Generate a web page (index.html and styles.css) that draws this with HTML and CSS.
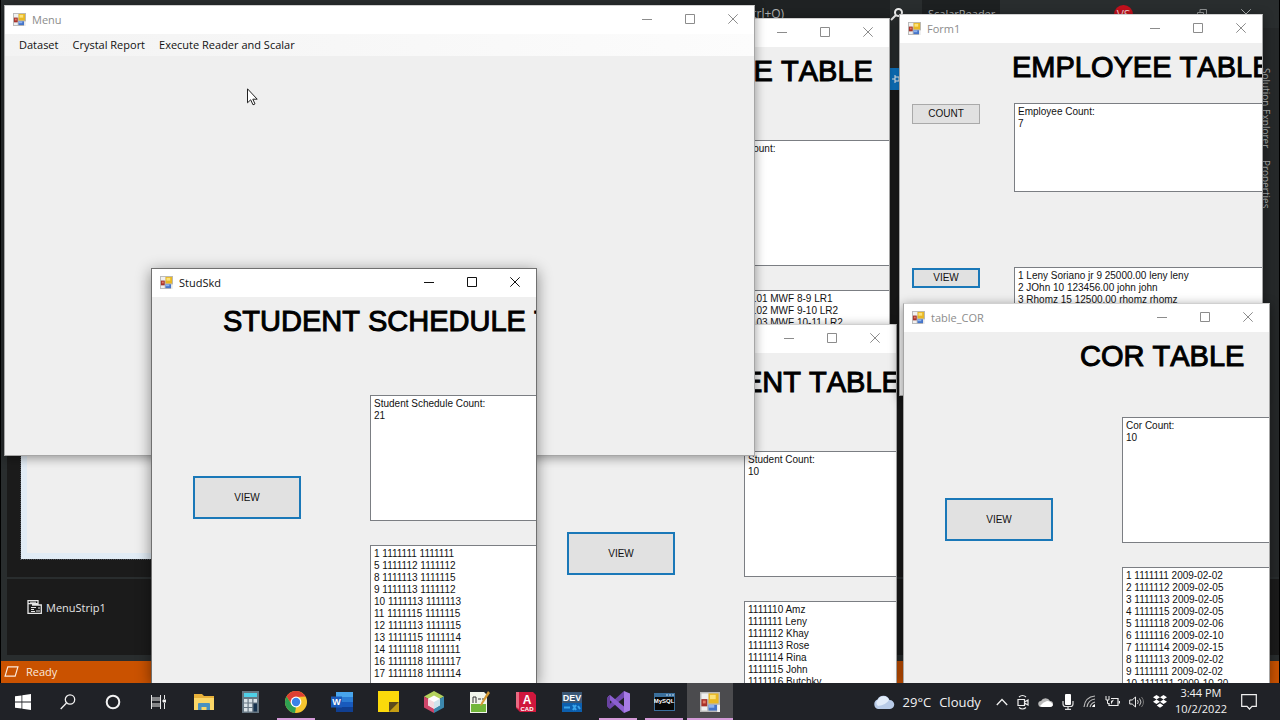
FILE: index.html
```html
<!DOCTYPE html>
<html lang="en">
<head>
<meta charset="utf-8">
<title>Desktop</title>
<link rel="stylesheet" href="styles.css">
</head>
<body>
<svg class="defs" aria-hidden="true">
  <symbol id="app" viewBox="0 0 14 14">
    <rect x="0" y="0" width="14" height="14" fill="#b9b9b9"/>
    <rect x="1" y="1" width="5" height="4" fill="#f0f0f0"/>
    <rect x="1" y="10" width="4" height="3" fill="#f0f0f0"/>
    <rect x="1" y="5" width="4" height="5" fill="#a8322a"/>
    <rect x="2" y="6" width="2" height="2" fill="#e27a66"/>
    <rect x="6" y="1" width="7" height="7" fill="#e9b823"/>
    <rect x="7" y="2" width="4" height="3" fill="#fbe27a"/>
    <rect x="6" y="9" width="6" height="4" fill="#4574c9"/>
    <rect x="6" y="9" width="4" height="2" fill="#8db2ee"/>
    <rect x="12" y="9" width="2" height="5" fill="#f0f0f0"/>
  </symbol>
  <symbol id="min" viewBox="0 0 10 10"><path d="M0 5.5h10" stroke="currentColor"/></symbol>
  <symbol id="max" viewBox="0 0 10 10"><path d="M.5.5h9v9h-9z" fill="none" stroke="currentColor"/></symbol>
  <symbol id="close" viewBox="0 0 10 10"><path d="M.3.3l9.4 9.4M9.7.3L.3 9.7" fill="none" stroke="currentColor"/></symbol>
</svg>

<main class="desktop">
  <section class="ide" aria-label="Visual Studio">
    <header class="ide-title">
      <span class="ide-search">Search (Ctrl+Q)</span>
      <svg class="ide-lens" viewBox="0 0 14 14"><circle cx="8.500" cy="5.500" r="3.500" fill="none" stroke="#f0f0f0" stroke-width="2"/><path d="M6 8l-5 5" stroke="#f0f0f0" stroke-width="2"/></svg>
      <span class="ide-solution">ScalarReader</span>
      <span class="ide-avatar">VS</span>
      <svg class="ide-restore" viewBox="0 0 10 10"><path d="M.5 3.500h6v6h-6zM3 3V.5h6.500v6H7" fill="none" stroke="#8f9293"/></svg>
      <svg class="ide-close" viewBox="0 0 10 10"><use href="#close"/></svg>
    </header>
    <div class="ide-main">
      <div class="designer">
        <div class="pin"><svg viewBox="0 0 9 10"><path d="M0 5h3M3 1v8M3 3h5M3 7h5M7 3v4" fill="none" stroke="#fff"/></svg></div>
        <div class="design-form"></div>
      </div>
      <aside class="side-tabs"><span>Solution Explorer</span><span>Properties</span></aside>
    </div>
    <div class="component-tray">
      <svg class="strip-icon" viewBox="0 0 16 14"><path d="M1 .7h10v3H1zM1 3.700v9.600h13.300V5H5" fill="none" stroke="#e6e6e6" stroke-width="1.300"/><path d="M3 2.200h6M4 7.500h5M4 9.500h3M9 11h4M4 11.500h4M11 8h2" stroke="#e6e6e6"/></svg>
      <span>MenuStrip1</span>
    </div>
    <footer class="ide-status">
      <svg viewBox="0 0 16 12"><path d="M4 1h11l-3 10H1z" fill="none" stroke="#fbe9dc" stroke-width="1.300"/></svg>
      <span>Ready</span>
    </footer>
  </section>

  <section class="window win-schedule">
    <header class="titlebar">
      <svg class="app-icon"><use href="#app"/></svg><span class="title">Schedule</span>
      <button class="ctl" aria-label="Minimize"><svg><use href="#min"/></svg></button><button class="ctl" aria-label="Maximize"><svg><use href="#max"/></svg></button><button class="ctl" aria-label="Close"><svg><use href="#close"/></svg></button>
    </header>
    <h2>SCHEDULE TABLE</h2>
    <div class="form">
      <div class="actions"></div>
      <div class="results">
        <ul class="listbox count"><li>Count:</li></ul>
        <ul class="listbox rows"><li>1101 MWF 8-9 LR1</li><li>1102 MWF 9-10 LR2</li><li>1103 MWF 10-11 LR2</li></ul>
      </div>
    </div>
  </section>

  <section class="window to-bottom win-student">
    <header class="titlebar">
      <svg class="app-icon"><use href="#app"/></svg><span class="title">Student</span>
      <button class="ctl" aria-label="Minimize"><svg><use href="#min"/></svg></button><button class="ctl" aria-label="Maximize"><svg><use href="#max"/></svg></button><button class="ctl" aria-label="Close"><svg><use href="#close"/></svg></button>
    </header>
    <h2>STUDENT TABLE</h2>
    <div class="form">
      <div class="actions"><button class="btn big focus">VIEW</button></div>
      <div class="results">
        <ul class="listbox count"><li>Student Count:</li><li>10</li></ul>
        <ul class="listbox rows"><li>1111110 Amz</li><li>1111111 Leny</li><li>1111112 Khay</li><li>1111113 Rose</li><li>1111114 Rina</li><li>1111115 John</li><li>1111116 Butchky</li></ul>
      </div>
    </div>
  </section>

  <section class="window win-employee">
    <header class="titlebar">
      <svg class="app-icon"><use href="#app"/></svg><span class="title">Form1</span>
      <button class="ctl" aria-label="Minimize"><svg><use href="#min"/></svg></button><button class="ctl" aria-label="Maximize"><svg><use href="#max"/></svg></button><button class="ctl" aria-label="Close"><svg><use href="#close"/></svg></button>
    </header>
    <h2>EMPLOYEE TABLE</h2>
    <div class="form">
      <div class="actions"><button class="btn small">COUNT</button><button class="btn small focus">VIEW</button></div>
      <div class="results">
        <ul class="listbox count"><li>Employee Count:</li><li>7</li></ul>
        <ul class="listbox rows"><li>1 Leny Soriano jr 9 25000.00 leny leny</li><li>2 JOhn 10 123456.00 john john</li><li>3 Rhomz 15 12500.00 rhomz rhomz</li></ul>
      </div>
    </div>
  </section>

  <section class="window to-bottom win-cor">
    <header class="titlebar">
      <svg class="app-icon"><use href="#app"/></svg><span class="title">table_COR</span>
      <button class="ctl" aria-label="Minimize"><svg><use href="#min"/></svg></button><button class="ctl" aria-label="Maximize"><svg><use href="#max"/></svg></button><button class="ctl" aria-label="Close"><svg><use href="#close"/></svg></button>
    </header>
    <h2>COR TABLE</h2>
    <div class="form">
      <div class="actions"><button class="btn big focus">VIEW</button></div>
      <div class="results">
        <ul class="listbox count"><li>Cor Count:</li><li>10</li></ul>
        <ul class="listbox rows"><li>1 1111111 2009-02-02</li><li>2 1111112 2009-02-05</li><li>3 1111113 2009-02-05</li><li>4 1111115 2009-02-05</li><li>5 1111118 2009-02-06</li><li>6 1111116 2009-02-10</li><li>7 1111114 2009-02-15</li><li>8 1111113 2009-02-02</li><li>9 1111111 2009-02-02</li><li>10 1111111 2009-10-20</li></ul>
      </div>
    </div>
  </section>

  <section class="window win-menu">
    <header class="titlebar">
      <svg class="app-icon"><use href="#app"/></svg><span class="title">Menu</span>
      <button class="ctl" aria-label="Minimize"><svg><use href="#min"/></svg></button><button class="ctl" aria-label="Maximize"><svg><use href="#max"/></svg></button><button class="ctl" aria-label="Close"><svg><use href="#close"/></svg></button>
    </header>
    <nav class="menubar"><button>Dataset</button><button>Crystal Report</button><button>Execute Reader and Scalar</button></nav>
  </section>

  <section class="window to-bottom active win-studskd">
    <header class="titlebar">
      <svg class="app-icon"><use href="#app"/></svg><span class="title">StudSkd</span>
      <button class="ctl" aria-label="Minimize"><svg><use href="#min"/></svg></button><button class="ctl" aria-label="Maximize"><svg><use href="#max"/></svg></button><button class="ctl" aria-label="Close"><svg><use href="#close"/></svg></button>
    </header>
    <h2>STUDENT SCHEDULE TABLE</h2>
    <div class="form">
      <div class="actions"><button class="btn big focus">VIEW</button></div>
      <div class="results">
        <ul class="listbox count"><li>Student Schedule Count:</li><li>21</li></ul>
        <ul class="listbox rows"><li>1 1111111 1111111</li><li>5 1111112 1111112</li><li>8 1111113 1111115</li><li>9 1111113 1111112</li><li>10 1111113 1111113</li><li>11 1111115 1111115</li><li>12 1111113 1111115</li><li>13 1111115 1111114</li><li>14 1111118 1111111</li><li>16 1111118 1111117</li><li>17 1111118 1111114</li></ul>
      </div>
    </div>
  </section>

  <svg class="cursor" viewBox="0 0 11 18"><path d="M.5.8v14l3.200-3 2.300 5 2-.9-2.200-4.700h4.400z" fill="#fff" stroke="#222"/></svg>
</main>

<footer class="taskbar">
  <div class="system-buttons">
    <button aria-label="Start"><svg width="16" height="16" viewBox="0 0 16 16" fill="#fff"><path d="M0 2.300l6.500-.9v6.100H0zM7.300 1.300L16 0v7.500H7.300zM0 8.400h6.500v6.200L0 13.700zM7.300 8.400H16V16l-8.700-1.200z"/></svg></button>
    <button aria-label="Search"><svg width="16" height="16" viewBox="0 0 16 16" fill="none" stroke="#f2f2f2" stroke-width="1.300"><circle cx="10" cy="5.500" r="4.700"/><path d="M6.500 9L.7 15"/></svg></button>
    <button aria-label="Cortana"><svg width="16" height="16" viewBox="0 0 16 16"><circle cx="8" cy="8" r="6.300" fill="none" stroke="#f2f2f2" stroke-width="2"/></svg></button>
    <button aria-label="Task view"><svg width="16" height="16" viewBox="0 0 16 16" fill="none" stroke="#e8e8e8"><path d="M1.500 1v3h9V1M1.500 15v-3h9v3M1.500 4v8M10.500 4v8M1.500 6h9v4h-9M14.500 1v4M14.500 9v6"/><path d="M13 6h3v2h-3z" fill="#fff"/></svg></button>
  </div>
  <div class="apps">
    <button aria-label="File Explorer"><svg width="20" height="18" viewBox="0 0 20 18"><path d="M0 1h8l2 2h10v14H0z" fill="#e8b13a"/><path d="M0 5h20v12H0z" fill="#fbd767"/><path d="M4 17v-6q0-1 1-1h10q1 0 1 1v6h-3.500v-3h-5v3z" fill="#4a91c0"/></svg></button>
    <button aria-label="Calculator"><svg width="17" height="22" viewBox="0 0 17 22"><rect width="17" height="22" fill="#667682"/><path d="M2 2h13v4H2z" fill="#4fd0e8"/><path d="M2 8h3.500v3.500H2zM6.700 8h3.500v3.500H6.700zM2 12.500h3.500V16H2zM6.700 12.500h3.500V16H6.700zM2 17h3.500v3.500H2zM6.700 17h3.500v3.500H6.700zM11.500 8H15v3.500h-3.500z" fill="#d9e2e7"/><path d="M11.500 12.500H15v8h-3.500z" fill="#17324e"/></svg></button>
    <button class="running" aria-label="Chrome"><svg width="22" height="22" viewBox="0 0 22 22"><circle cx="11" cy="11" r="11" fill="#f7c62f"/><path d="M1.500 5.500A11 11 0 0 1 20.500 5.500L11 6 6.700 13.500z" fill="#de3f33"/><path d="M1.500 5.500L6.700 13.500 11 16 10 22A11 11 0 0 1 1.500 5.500z" fill="#2fa052"/><circle cx="11" cy="11" r="5.400" fill="#fff"/><circle cx="11" cy="11" r="4.200" fill="#3b82e6"/></svg></button>
    <button aria-label="Word"><svg width="22" height="20" viewBox="0 0 22 20"><rect x="5" width="17" height="20" rx="1" fill="#2b7cd3"/><path d="M5 0h17v5H5z" fill="#48a5ec"/><path d="M5 10h17v5H5z" fill="#185abd"/><path d="M5 15h17v5H5z" fill="#103f91"/><rect y="4.500" width="11" height="11" fill="#1b5ab9"/><text x="5.500" y="13" text-anchor="middle" font-size="9">W</text></svg></button>
    <button aria-label="Sticky Notes"><svg width="21" height="21" viewBox="0 0 21 21"><path d="M0 0h21v11L11 21H0z" fill="#fbd90b"/><path d="M11 11h10L11 21z" fill="#5b4a1c"/><path d="M21 11v10H11z" fill="#c49d13"/></svg></button>
    <button aria-label="NetBeans"><svg width="20" height="22" viewBox="0 0 20 22"><path d="M10 0l10 5.500L10 11 0 5.500z" fill="#b4d35d"/><path d="M0 5.500L10 11v11L0 16.500z" fill="#ce4569"/><path d="M20 5.500L10 11v11l10-5.500z" fill="#3c88ad"/><path d="M10 4.500l6 3.200v6.600l-6 3.400-6-3.400V7.700z" fill="#fff"/><path d="M10 11l6-3.300v6.600l-6 3.400z" fill="#cfe4ec"/><path d="M4 7.700l6 3.300v6.700l-6-3.400z" fill="#f3d9df"/></svg></button>
    <button aria-label="Notepad++"><svg width="20" height="22" viewBox="0 0 20 22"><path d="M0 1h14l3 3v18H0z" fill="#f2f5ec"/><path d="M1 13h15v8H1z" fill="#71b63a"/><path d="M3 12V6h3v6M8 8h3M12 8h3" fill="none" stroke="#333"/><path d="M18 0l2 2-8 12-2 1 1-3z" fill="#d59a35"/></svg></button>
    <button aria-label="AutoCAD"><svg width="20" height="22" viewBox="0 0 20 22"><path d="M0 1h17l3 3v17H4l-4-4z" fill="#d0173d"/><path d="M0 1h3v17l-3-2z" fill="#e96a82"/><text x="11" y="13" text-anchor="middle" font-size="12">A</text><text x="11" y="20" text-anchor="middle" font-size="6">CAD</text></svg></button>
    <button aria-label="Dev-C++"><svg width="20" height="20" viewBox="0 0 20 20"><rect width="20" height="11" fill="#3b5876"/><rect y="11" width="20" height="9" fill="#0c5fae"/><path d="M2 15.500h6M11 13l3 5M14 13l-3 5M16 14l2 3" stroke="#39a4ea" stroke-width="2"/><text x="10" y="9" text-anchor="middle" font-size="9">DEV</text></svg></button>
    <button class="running" aria-label="Visual Studio"><svg width="23" height="22" viewBox="0 0 23 22"><path d="M17 0l6 2.500v17L17 22z" fill="#a77be6"/><path d="M17 0L1 14.500v2L3 18 17 6.500z" fill="#7048ae"/><path d="M17 22L1 7.500v-2L3 4l14 11.500z" fill="#8c5fd0"/><path d="M0 6.500l3-2v13l-3-2z" fill="#68429f"/></svg></button>
    <button class="running" aria-label="MySQL"><svg width="21" height="18" viewBox="0 0 21 18"><rect width="21" height="18" fill="#3a6f9c"/><path d="M1 4h19v13H1z" fill="#080808"/><path d="M12 2h2M15 2h2M18 2h2" stroke="#cde"/><text x="10" y="10" text-anchor="middle" font-size="6">MySQL</text></svg></button>
    <button class="running current" aria-label="Windows Forms"><svg width="20" height="20"><use href="#app"/></svg></button>
  </div>
  <div class="status-area">
    <svg width="22" height="15" viewBox="0 0 22 15"><path d="M5 15a5 5 0 0 1-.5-9.500A6.500 6.500 0 0 1 16.500 6 4.500 4.500 0 0 1 17 15z" fill="#b8cbe8"/><path d="M5 12a4 4 0 0 1 0-6.500A6 6 0 0 1 16 6q-3 5-11 6z" fill="#e2ecfa"/></svg>
    <span class="weather"><span>29°C</span><span>Cloudy</span></span>
    <div class="tray">
      <svg width="12" height="8" viewBox="0 0 12 8"><path d="M.8 7L6 1.500 11.200 7" fill="none" stroke="#eee" stroke-width="1.300"/></svg>
      <svg width="12" height="16" viewBox="0 0 12 16"><path d="M1 5.500h6.500v6H1zM7.500 8l3.500-2v5l-3.500-2M2 3q3.500-3 7 0M2 13.500q3.500 3 7 0" fill="none" stroke="#eee" stroke-width="1.200"/></svg>
      <svg width="15" height="10" viewBox="0 0 15 10"><path d="M3.500 10A3 3 0 0 1 3 4a5 5 0 0 1 9 0 3 3 0 0 1 0 6z" fill="#b9b9b9"/><path d="M2 9q3-4 7-5 4 0 6 4-1 2-3 2H4z" fill="#fff"/></svg>
      <svg width="12" height="16" viewBox="0 0 12 16"><rect x="3" width="6" height="11" rx="1" fill="#fff"/><path d="M1 7v3q0 2.500 2.500 2.500h5q2.500 0 2.500-2.500V7M6 12v3M3 15.300h6" fill="none" stroke="#ddd" stroke-width="1.200"/></svg>
      <svg width="13" height="13" viewBox="0 0 13 13"><path d="M1 12Q2 2 12 1M4 12q1-7 8-8M7 12q1-4 5-5" fill="none" stroke="#bbb" stroke-width="1.200"/><path d="M9 12q.5-2 3-3v3z" fill="#fff"/></svg>
      <svg width="15" height="12" viewBox="0 0 15 12"><path d="M6 2.500h7v7H4v-2M14.500 5v2.500" fill="none" stroke="#eee" stroke-width="1.200"/><path d="M1 0v4h3V0M2.500 4v3.500h2" fill="none" stroke="#eee"/><path d="M6 8.500V5l3-1.500z" fill="#eee"/></svg>
      <svg width="15" height="12" viewBox="0 0 15 12"><path d="M.7 4h2.500L6.500 1v10L3.200 8H.7z" fill="none" stroke="#eee"/><path d="M8.500 4q1.500 2 0 4M10.500 2.500q3 3.500 0 7" fill="none" stroke="#ccc"/><path d="M12.500 1q4 5 0 10" fill="none" stroke="#777"/></svg>
      <svg width="14" height="13" viewBox="0 0 14 13" fill="#fff"><path d="M3.500 0L7 2.200 3.500 4.400 0 2.200zM10.500 0L14 2.200l-3.500 2.200L7 2.200zM3.500 4.600L7 6.800 3.500 9 0 6.800zM10.500 4.600L14 6.800 10.500 9 7 6.800zM7 8.300l3.300 2.200L7 12.700l-3.300-2.200z"/></svg>
    </div>
    <div class="clock"><time>3:44 PM</time><time>10/2/2022</time></div>
    <svg width="16" height="16" viewBox="0 0 16 16"><path d="M.7.700h14.600v11.600H11L8.500 15 6 12.300H.7z" fill="none" stroke="#f0f0f0" stroke-width="1.200"/></svg>
  </div>
</footer>
</body>
</html>
```
FILE: styles.css
```css
* { box-sizing: border-box; }

body {
  margin: 0;
  height: 100vh;
  display: flex;
  flex-direction: column;
  overflow: hidden;
  background: #000;
  font-family: "Open Sans", "Noto Sans", sans-serif;
  font-size: 11px;
}

button {
  margin: 0;
  padding: 0;
  border: 0;
  background: none;
  font: inherit;
  color: inherit;
}

svg { display: block; flex: none; }
.defs { position: absolute; width: 0; height: 0; }

.desktop {
  position: relative;
  flex: 1;
  min-height: 0;
  overflow: hidden;
}

/* IDE behind the windows */
.ide {
  height: 100%;
  display: flex;
  flex-direction: column;
  margin: 0 1px;
  background: #292d2e;
  color: #b0b3b4;
}

.ide-title {
  height: 28px;
  flex: none;
  display: flex;
  align-items: center;
  justify-content: flex-end;
  padding-right: 28px;
}

.ide-search {
  width: 230px;
  padding-left: 40px;
  font-size: 12px;
  line-height: 28px;
  background: #1f2223;
}
.ide-lens { width: 14px; height: 14px; margin-right: 18px; }
.ide-solution {
  width: 78px;
  padding: 0 6px;
  line-height: 28px;
  background: #1d2021;
}
.ide-avatar {
  width: 19px;
  height: 19px;
  margin: 0 64px 0 114px;
  border-radius: 50%;
  background: #c4101c;
  color: #f3c9c9;
  font-size: 12px;
  line-height: 19px;
  text-align: center;
}
.ide-restore { width: 10px; height: 10px; margin-right: 34px; }
.ide-close { width: 10px; height: 10px; }

.ide-main { flex: 1; min-height: 0; display: flex; }

.designer {
  flex: 1;
  display: flex;
  flex-direction: column;
  justify-content: space-between;
  margin: 40px 0 0 6px;
  padding: 0 0 18px 14px;
  background: #1b1b1b;
}
.pin {
  width: 12px;
  height: 22px;
  margin-left: 869px;
  padding: 6px 0 0 2px;
  background: #0e7acb;
}
.pin svg { width: 9px; height: 10px; }
.design-form {
  width: 560px;
  height: 440px;
  border: 6px solid #e2ecf5;
  outline: 1px dotted #4a4f55;
  background: #efefef;
}

.side-tabs {
  width: 19px;
  padding-top: 40px;
  display: flex;
  flex-direction: column;
  align-items: flex-start;
  gap: 12px;
  background: #252829;
  color: #a9acad;
}
.side-tabs span { writing-mode: vertical-rl; line-height: 12px; font-size: 10px; }

.component-tray {
  height: 78px;
  flex: none;
  display: flex;
  align-items: center;
  gap: 3px;
  margin: 0 0 6px 6px;
  padding: 0 0 20px 20px;
  border-top: 2px solid #292d2e;
  background: #1b1b1b;
  color: #e4e4e4;
}
.strip-icon { width: 16px; height: 14px; }

.ide-status {
  height: 22px;
  flex: none;
  display: flex;
  align-items: center;
  gap: 7px;
  padding: 0 0 2px 3px;
  background: #ca5200;
  color: #fbe9dc;
}
.ide-status svg { width: 15px; height: 11px; }

/* Windows placed freely on the desktop */
.window {
  position: absolute;
  overflow: hidden;
  border: 1px solid #a6a6a6;
  border-top-color: #d0d0d0;
  background: #efefef;
  box-shadow: 0 2px 10px rgba(0, 0, 0, 0.4);
}
.to-bottom { bottom: 0; border-bottom: 0; }
.active { border-color: #707070; box-shadow: 0 3px 14px rgba(0, 0, 0, 0.45); }

.win-schedule { left: 523px; top: 18px; width: 367px; height: 380px; }
.win-student { left: 525px; top: 324px; width: 372px; }
.win-employee { left: 899px; top: 14px; width: 364px; height: 382px; }
.win-cor { left: 903px; top: 303px; width: 367px; }
.win-menu { left: 4px; top: 5px; width: 751px; height: 451px; }
.win-studskd { left: 151px; top: 268px; width: 386px; }

.titlebar {
  height: 28px;
  display: flex;
  align-items: center;
  padding: 0 0 2px 8px;
  background: #fff;
  color: #8c8c8c;
}
.active .titlebar { color: #111; }
.app-icon { width: 13px; height: 13px; margin-right: 6px; }
.title { flex: 1; }
.ctl { width: 43px; height: 26px; display: flex; align-items: center; justify-content: center; }
.ctl svg { width: 10px; height: 10px; }

.menubar {
  height: 22px;
  display: flex;
  align-items: center;
  gap: 14px;
  padding: 0 0 2px 14px;
  background: linear-gradient(90deg, #f3f3f3, #fcfcfc);
  color: #111;
}

h2 {
  margin: 0;
  padding-top: 8px;
  font: 400 29px/32px "Liberation Sans", Arial, sans-serif;
  font-kerning: none;
  color: #000;
  white-space: nowrap;
  -webkit-text-stroke: 1px #000;
}
.win-schedule h2 { padding-left: 91px; }
.win-student h2 { padding-left: 138px; padding-top: 13px; }
.win-employee h2 { padding-left: 112px; }
.win-cor h2 { padding-left: 176px; }
.win-studskd h2 { padding-left: 71px; }

.form {
  display: flex;
  margin-top: 58px;
  font: 10px/12px "Liberation Sans", Arial, sans-serif;
  color: #111;
}
.win-schedule .form { margin-top: 53px; }
.win-student .form { margin-top: 53px; }
.win-employee .form { margin-top: 20px; }
.win-cor .form { margin-top: 45px; }

.actions {
  width: 218px;
  flex: none;
  padding: 81px 0 0 41px;
}
.win-employee .actions {
  width: 114px;
  display: flex;
  flex-direction: column;
  gap: 144px;
  padding: 1px 0 0 12px;
}

.results { flex: 1; display: flex; flex-direction: column; gap: 24px; }
.win-employee .results { gap: 75px; }

.listbox {
  margin: 0;
  padding: 2px 3px;
  list-style: none;
  border: 1px solid #7b7e83;
  border-right: 0;
  background: #fff;
  white-space: nowrap;
}
.count { height: 126px; }
.win-employee .count { height: 89px; }
.rows { height: 240px; }

.btn { display: block; border: 1px solid #a9a9a9; background: #e1e1e1; }
.btn.focus { border: 2px solid #1a78b8; }
.big { width: 108px; height: 43px; }
.small { width: 68px; height: 20px; }

.cursor { position: absolute; left: 247px; top: 88px; width: 11px; height: 18px; }

/* Taskbar */
.taskbar {
  height: 37px;
  flex: none;
  display: flex;
  justify-content: space-between;
  background: #202227;
  color: #f2f2f2;
}
.system-buttons, .apps { display: flex; }
.system-buttons button, .apps button {
  position: relative;
  display: flex;
  align-items: center;
  justify-content: center;
}
.system-buttons button { width: 45px; }
.apps { margin: 0 auto 0 1px; }
.apps button { width: 46px; }
.apps text { fill: #fff; font-family: "Liberation Sans", Arial, sans-serif; font-weight: 700; }
.running::after {
  content: "";
  position: absolute;
  left: 4px;
  right: 4px;
  bottom: 0;
  height: 2px;
  background: #d49ad8;
}
.apps .current { background: #4b4b4e; }
.current::after { left: 0; right: 0; }

.status-area { display: flex; align-items: center; padding-right: 23px; }
.weather { display: flex; gap: 8px; margin: 0 15px 0 8px; font-size: 13px; }
.tray { display: flex; align-items: center; gap: 9px; }
.clock {
  display: flex;
  flex-direction: column;
  align-items: center;
  margin: 0 14px 0 8px;
  padding-bottom: 2px;
  line-height: 16px;
}
```
